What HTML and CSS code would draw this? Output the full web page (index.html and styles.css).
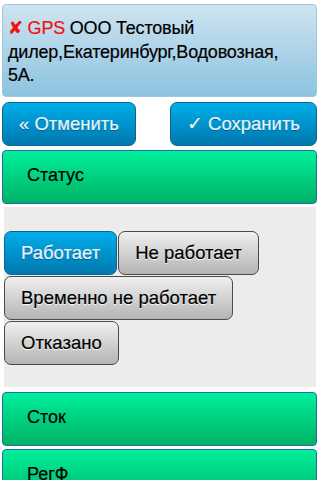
FILE: index.html
```html
<!DOCTYPE html>
<html lang="ru">
<head>
    <meta charset="UTF-8">
    <meta name="viewport" content="width=device-width, initial-scale=1.0">
    <title>Дилер</title>
    <link rel="stylesheet" href="styles.css">
</head>
<body>
    <div id="page">
        <div class="info">
            <span class="gps">&#x2718; GPS</span> ООО Тестовый дилер,Екатеринбург,Водовозная,<br>5А.
        </div>

        <div class="actions">
            <button class="btn-blue">&laquo; Отменить</button>
            <button class="btn-blue">&#x2713; Сохранить</button>
        </div>

        <div class="bar">Статус</div>
        <div class="panel">
            <button class="choice selected">Работает</button>
            <button class="choice">Не работает</button>
            <button class="choice">Временно не работает</button>
            <button class="choice">Отказано</button>
        </div>

        <div class="bar">Сток</div>
        <div class="bar">РегФ</div>
    </div>
</body>
</html>
```

FILE: styles.css
```css
body {
    font-family: 'Liberation Sans', Arial, sans-serif;
    margin: 0;
    background-color: #FFF;
    font-size: 18px;
    -webkit-text-stroke: 0.2px currentColor;
}
#page {
    padding: 4px 3px 0 2px;
}
.info {
    background: linear-gradient(#CFE4F0, #8CC3E0);
    border: 1px solid #9CC8E2;
    border-radius: 4px;
    padding: 12px 5px 8px 5px;
    letter-spacing: -0.2px;
    line-height: 23.5px;
    color: #000;
}
.gps {
    color: #F01010;
}
.actions {
    display: flex;
    justify-content: space-between;
    margin: 5px 0 4px 0;
}
button {
    font-family: inherit;
    font-size: 18.5px;
    cursor: pointer;
    -webkit-text-stroke: 0.2px currentColor;
}
.btn-blue {
    height: 44px;
    padding: 0 16px;
    color: #E8F4FC;
    background: linear-gradient(#00AEEA, #0078AE);
    border: 1px solid #0A6590;
    border-radius: 7px;
    text-shadow: 0 1px 0 #055F8A;
}
.bar {
    height: 52px;
    line-height: 49px;
    padding-left: 24px;
    background: linear-gradient(#00F09C, #00B264);
    border: 1px solid #1B70A8;
    border-radius: 4px;
    margin-bottom: 3px;
}
.panel {
    background-color: #EDECEA;
    margin: 0 1px 5px 2px;
    padding: 24px 0 22px 0;
    display: flex;
    flex-wrap: wrap;
    gap: 1px;
}
.choice {
    height: 44px;
    padding: 0 16px;
    color: #000;
    background: linear-gradient(#F0F0F0, #B4B4B4);
    border: 1px solid #4A4A4A;
    border-radius: 7px;
    text-shadow: 0 1px 1px #FFF;
}
.choice.selected {
    color: #E8F4FC;
    background: linear-gradient(#00AEEA, #0078AE);
    border-color: #0A6590;
    text-shadow: 0 1px 0 #055F8A;
}
```
